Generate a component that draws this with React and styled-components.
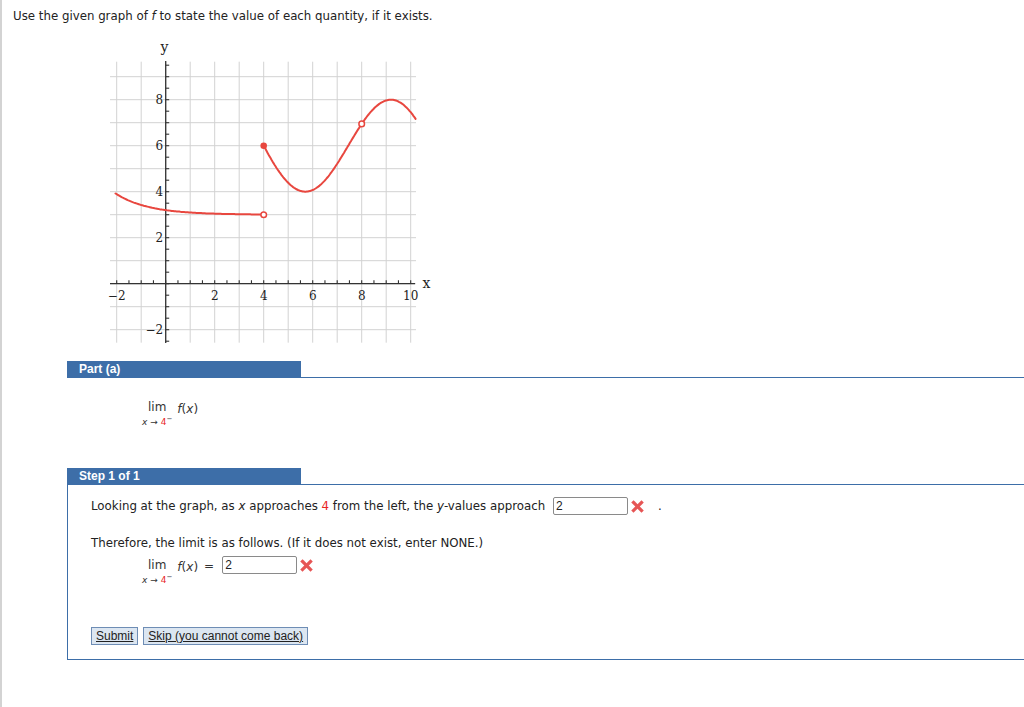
import React from "react";
import styled, { createGlobalStyle } from "styled-components";

const GlobalStyle = createGlobalStyle`
  html, body {
    margin: 0;
    padding: 0;
    background: #fff;
  }
  body {
    font-family: "DejaVu Sans", Verdana, sans-serif;
    color: #222;
  }
`;

const BLUE = "#3d6ea8";
const RED = "#e8473f";

// graph mapping (svg coords)
const X = (x) => 60.7 + 24.5 * x;
const Y = (y) => 245.7 - 23 * y;

const range = (a, b, step) => {
  const out = [];
  for (let v = a; v <= b + 1e-9; v += step) out.push(Math.round(v * 100) / 100);
  return out;
};

const toPath = (pts) =>
  "M" + pts.map(([x, y]) => `${X(x).toFixed(1)},${Y(y).toFixed(1)}`).join(" L");

const leftCurve = () => {
  const pts = range(-2.05, 4, 0.05).map((x) => [x, 3 + 0.89 * Math.exp(-0.746 * (x + 2))]);
  return toPath(pts);
};

const rightFn = (x) => 6 - 2 * Math.cos((Math.PI * (x - 5.7)) / 3.5) + 0.1 * Math.exp(-(x - 4) * 3) - 0.08 * Math.max(0, x - 9.2) ** 2;

const rightCurve = () => toPath(range(4, 10.22, 0.04).map((x) => [x, rightFn(x)]));

const Graph = () => (
  <GraphSvg width="330" height="310" viewBox="0 0 330 310">
    <g stroke="#d2d2d2" strokeWidth="1">
      {range(-2, 10, 1).map((i) => (
        <line key={"v" + i} x1={X(i)} x2={X(i)} y1={23.7} y2={304.7} />
      ))}
      {range(-2, 9, 1).map((j) => (
        <line key={"h" + j} x1={5} x2={311} y1={Y(j)} y2={Y(j)} />
      ))}
    </g>
    <g stroke="#333" strokeWidth="1.3">
      <line x1={5} x2={310} y1={Y(0)} y2={Y(0)} />
      <line x1={X(0)} x2={X(0)} y1={23} y2={305} />
      {range(-2, 10, 0.5).map((i) => (
        <line key={"tx" + i} x1={X(i)} x2={X(i)} y1={Y(0) - 3.5} y2={Y(0)} strokeWidth="1.1" />
      ))}
      {range(-2.5, 9.5, 0.5).map((j) => (
        <line key={"ty" + j} x1={X(0)} x2={X(0) + 3.5} y1={Y(j)} y2={Y(j)} strokeWidth="1.1" />
      ))}
    </g>
    <g fill="#222" fontFamily="'DejaVu Serif', serif" fontSize="12">
      {[-2, 2, 4, 6, 8, 10].map((v) => (
        <text key={"lx" + v} x={X(v)} y={Y(0) + 16} textAnchor="middle">
          {v < 0 ? "\u2212" + Math.abs(v) : v}
        </text>
      ))}
      {[-2, 2, 4, 6, 8].map((v) => (
        <text key={"ly" + v} x={X(0) - 2.5} y={Y(v) + 4.5} textAnchor="end">
          {v < 0 ? "\u2212" + Math.abs(v) : v}
        </text>
      ))}
      <text x={59.5} y={13.5} textAnchor="middle" fontSize="14">y</text>
      <text x={321.5} y={250} textAnchor="middle" fontSize="14">x</text>
    </g>
    <g fill="none" stroke={RED} strokeWidth="2" strokeLinecap="round" strokeLinejoin="round">
      <path d={leftCurve()} />
      <path d={rightCurve()} />
    </g>
    <circle cx={X(4)} cy={Y(6)} r="3.3" fill={RED} />
    <circle cx={X(4)} cy={Y(3)} r="2.8" fill="#fff" stroke={RED} strokeWidth="1.5" />
    <circle cx={X(8)} cy={Y(rightFn(8))} r="2.8" fill="#fff" stroke={RED} strokeWidth="1.5" />
  </GraphSvg>
);

const WrongMark = () => (
  <Mark width="13" height="13" viewBox="0 0 13 13">
    <g stroke="#e65555" strokeWidth="3.2" strokeLinecap="square">
      <line x1="2.5" y1="2.5" x2="10.5" y2="10.5" />
      <line x1="10.5" y1="2.5" x2="2.5" y2="10.5" />
    </g>
  </Mark>
);

const Limit = ({ children }) => (
  <LimRow>
    <LimCol>
      <LimWord>lim</LimWord>
      <LimSub>
        x <Arrow>→</Arrow> <RedNum>4</RedNum>
        <sup>−</sup>
      </LimSub>
    </LimCol>
    <Fx>
      <i>f</i>(<i>x</i>)
    </Fx>
    {children}
  </LimRow>
);

export default function App() {
  return (
    <>
      <GlobalStyle />
      <Page>
        <Intro>
          Use the given graph of <i>f</i> to state the value of each quantity, if it exists.
        </Intro>
        <Graph />

        <Section>
          <HeaderRow>
            <Tab>Part (a)</Tab>
            <Rule />
          </HeaderRow>
          <PartBody>
            <Limit />
          </PartBody>

          <HeaderRow>
            <Tab>Step 1 of 1</Tab>
            <Rule />
          </HeaderRow>
          <StepBox>
            <Line>
              Looking at the graph, as <i>x</i> approaches <RedNum>4</RedNum> from the left, the <i>y</i>-values
              approach <Answer defaultValue="2" />
              <WrongMark />
              <Period>.</Period>
            </Line>
            <Line $top={19}>Therefore, the limit is as follows. (If it does not exist, enter NONE.)</Line>
            <LimLine>
              <Limit>
                <Equals>=</Equals>
                <Answer defaultValue="2" />
                <WrongMark />
              </Limit>
            </LimLine>
            <Buttons>
              <Button>Submit</Button>
              <Button>Skip (you cannot come back)</Button>
            </Buttons>
          </StepBox>
        </Section>
      </Page>
    </>
  );
}

const Page = styled.div`
  box-sizing: border-box;
  min-height: 707px;
  border-left: 2px solid #d3d3d3;
  padding-top: 9px;
`;

const Intro = styled.p`
  margin: 0 0 0 11px;
  font-size: 11.8px;
  line-height: 14px;
  color: #222;
`;

const GraphSvg = styled.svg`
  display: block;
  margin: 15px 0 0 103px;
`;

const Section = styled.div`
  margin: 13px 0 0 65px;
`;

const HeaderRow = styled.div`
  display: flex;
  align-items: stretch;
  height: 17px;
`;

const Tab = styled.div`
  width: 222px;
  padding-left: 12px;
  background: ${BLUE};
  color: #fff;
  font-family: "Liberation Sans", Arial, sans-serif;
  font-weight: bold;
  font-size: 12px;
  line-height: 17px;
`;

const Rule = styled.div`
  flex: 1;
  border-bottom: 1px solid ${BLUE};
`;

const PartBody = styled.div`
  height: 90px;
  padding: 18px 0 0 81px;
  box-sizing: border-box;
`;

const LimRow = styled.div`
  display: inline-flex;
  align-items: flex-start;
  font-family: "DejaVu Sans", Verdana, sans-serif;
  color: #333;
`;

const LimCol = styled.div`
  display: flex;
  flex-direction: column;
  align-items: center;
`;

const LimWord = styled.span`
  font-size: 12px;
  line-height: 14px;
  padding-right: 8px;
`;

const LimSub = styled.span`
  font-size: 9px;
  line-height: 10px;
  font-style: italic;
  white-space: nowrap;
  margin-left: -8px;

  sup {
    font-style: normal;
    font-size: 7px;
    vertical-align: 4px;
  }
`;

const Arrow = styled.span`
  font-style: normal;
`;

const RedNum = styled.span`
  color: #e8251f;
  font-style: normal;
`;

const Fx = styled.span`
  font-size: 12px;
  line-height: 14px;
  margin-top: 2px;
  margin-left: 3px;
`;

const Equals = styled.span`
  font-size: 12px;
  line-height: 14px;
  margin: 2px 4px 0 6px;
`;

const StepBox = styled.div`
  border-left: 1px solid ${BLUE};
  border-bottom: 1px solid ${BLUE};
  padding: 12px 0 14px 23px;
`;

const Line = styled.div`
  display: flex;
  align-items: center;
  margin-top: ${(p) => (p.$top || 0)}px;
  font-size: 11.8px;
  line-height: 18px;
  color: #222;
  white-space: pre;
`;

const Answer = styled.input`
  box-sizing: border-box;
  width: 75px;
  height: 18px;
  margin-left: 4px;
  padding: 0 2px;
  border: 1px solid #8a8a8a;
  border-radius: 2px;
  font-family: "Liberation Sans", Arial, sans-serif;
  font-size: 12px;
  color: #222;
  outline: none;
`;

const Mark = styled.svg`
  display: block;
  margin-left: 3px;
  flex: none;
`;

const Period = styled.span`
  margin-left: 14px;
`;

const LimLine = styled.div`
  margin: 2px 0 0 57px;

  ${LimCol} {
    padding-top: 2px;
  }
  ${Fx} {
    margin-top: 4px;
  }
  ${Equals} {
    margin-top: 3px;
  }
  ${Mark} {
    margin-top: 3px;
  }
`;

const Buttons = styled.div`
  display: flex;
  gap: 5px;
  margin-top: 42px;
`;

const Button = styled.button`
  height: 18px;
  padding: 0 4px;
  background: #dce6f1;
  border: 1px solid #6e8db5;
  border-radius: 0;
  font-family: "Liberation Sans", Arial, sans-serif;
  font-size: 12px;
  color: #222;
  text-decoration: underline;
  line-height: 16px;
  cursor: pointer;
`;
